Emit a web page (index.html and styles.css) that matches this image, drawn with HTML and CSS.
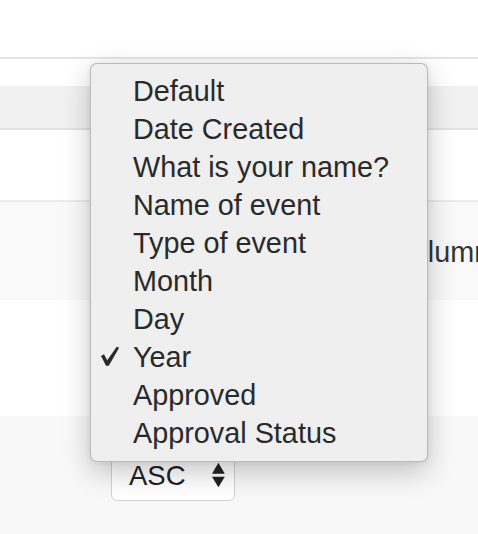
FILE: index.html
```html
<!DOCTYPE html>
<html>
<head>
<meta charset="utf-8">
<link rel="stylesheet" href="styles.css">
</head>
<body>
<div class="page">
  <div class="header"></div>
  <div class="gap-row"></div>
  <div class="thead-row"></div>
  <div class="white-row"></div>
  <div class="field-row"><span class="field-label">Column</span></div>
  <div class="white-row tall"></div>
  <div class="order-row">
    <div class="select">
      <span class="select-value">ASC</span>
      <svg class="select-arrows" width="13" height="26" viewBox="0 0 13 26"><path d="M0 11.7 L6.4 0.7 L12.8 11.7 Z M0 14.7 L12.8 14.7 L6.4 25.3 Z" fill="#222"/></svg>
    </div>
  </div>

  <div class="menu">
    <div class="item"><span class="check"></span>Default</div>
    <div class="item"><span class="check"></span>Date Created</div>
    <div class="item"><span class="check"></span>What is your name?</div>
    <div class="item"><span class="check"></span>Name of event</div>
    <div class="item"><span class="check"></span>Type of event</div>
    <div class="item"><span class="check"></span>Month</div>
    <div class="item"><span class="check"></span>Day</div>
    <div class="item"><span class="check"><svg width="20" height="22" viewBox="0 0 20 22"><path d="M1 11 L4 9.3 L7.2 15.3 L16.7 1.7 L19.1 2.7 L8.8 20.7 L6 20.7 Z" fill="#2a2a2a"/></svg></span>Year</div>
    <div class="item"><span class="check"></span>Approved</div>
    <div class="item"><span class="check"></span>Approval Status</div>
  </div>
</div>
</body>
</html>
```

FILE: styles.css
```css
html, body {
  margin: 0;
  padding: 0;
  background: #ffffff;
}

.page {
  position: relative;
  width: 478px;
  height: 534px;
  overflow: hidden;
  font-family: "Liberation Sans", Arial, sans-serif;
  color: #333333;
}

.header {
  height: 57px;
  border-bottom: 2px solid #e4e4e4;
}

.gap-row {
  height: 27px;
}

.thead-row {
  height: 42px;
  background: #f1f1f1;
  border-bottom: 2px solid #e3e3e3;
}

.white-row {
  height: 70px;
}

.white-row.tall {
  height: 116px;
}

.field-row {
  height: 98px;
  background: #f9f9f9;
  border-top: 2px solid #ececec;
  display: flex;
  align-items: center;
  padding-left: 391px;
  white-space: nowrap;
}

.field-label {
  font-size: 28.8px;
  color: #333333;
  margin-top: 2px;
}

.order-row {
  height: 118px;
  background: #f8f8f8;
  padding-left: 111px;
  padding-top: 31px;
  box-sizing: border-box;
}

.select {
  width: 124px;
  height: 54px;
  box-sizing: border-box;
  border: 1px solid #d2d2d2;
  border-radius: 6px;
  background: #ffffff;
  display: flex;
  align-items: center;
  padding-left: 17px;
  padding-right: 9px;
}

.select-value {
  flex: 1;
  font-size: 27.5px;
  color: #222222;
  margin-top: 3px;
}

.select-arrows {
  display: block;
  margin-top: 1px;
}

.menu {
  position: absolute;
  left: 90px;
  top: 63px;
  width: 338px;
  box-sizing: border-box;
  padding: 8px 0 9px 0;
  background: #efefef;
  border: 1px solid rgba(0, 0, 0, 0.22);
  border-radius: 7px;
  box-shadow: 0 10px 28px rgba(0, 0, 0, 0.22), 0 0 6px rgba(0, 0, 0, 0.08);
}

.item {
  display: flex;
  align-items: center;
  height: 38px;
  font-size: 28.8px;
  line-height: 38px;
  color: #2a2a2a;
  white-space: nowrap;
}

.check {
  width: 42px;
  height: 38px;
  flex: none;
  display: flex;
  align-items: center;
  padding-left: 9px;
  box-sizing: border-box;
}

.check svg {
  display: block;
  margin-top: -2px;
}
```
